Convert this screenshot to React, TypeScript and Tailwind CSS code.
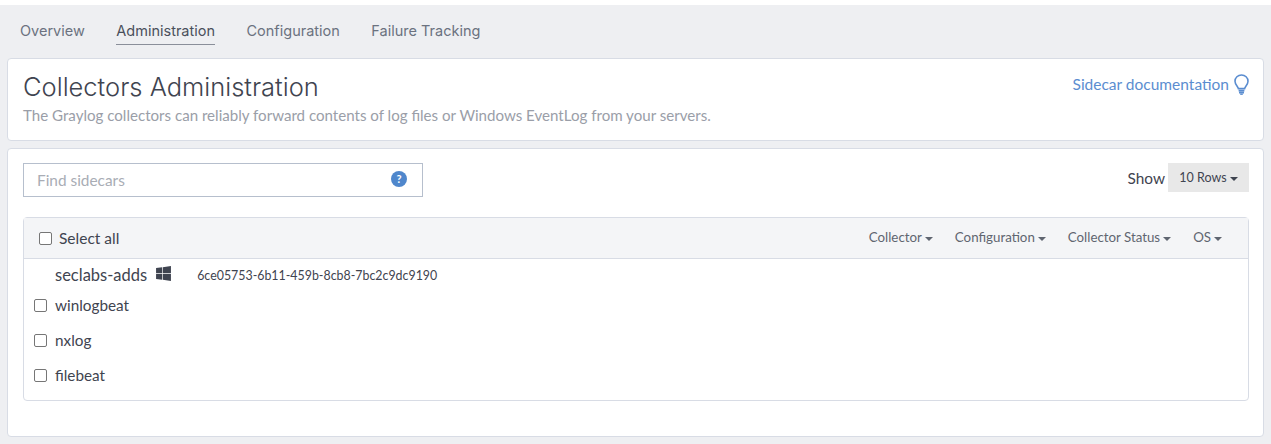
const bodyFont = "font-['Lato','Noto_Sans',sans-serif]";

const Caret = () => (
  <span className="ml-[3px] inline-block h-0 w-0 border-x-[4px] border-t-[4px] border-x-transparent border-t-current align-middle" />
);

const WindowsIcon = () => (
  <svg viewBox="0 0 448 512" className="mb-[3px] h-[17px] w-[15px] fill-[#3f4450]">
    <path d="M0 93.7l183.6-25.3v177.4H0V93.7zm0 324.6l183.6 25.3V268.4H0v149.9zm203.8 28L448 480V268.4H203.8v177.9zm0-380.6v180.1H448V32L203.8 65.7z" />
  </svg>
);

const BulbIcon = () => (
  <svg viewBox="0 0 15 21" className="h-[21px] w-[15px] fill-none stroke-[#5b8dd0]">
    <path
      d="M4.4 14.6C4 12.4 1 10.6 1 7.2 1 3.6 3.9 1 7.5 1S14 3.6 14 7.2c0 3.4-3 5.2-3.4 7.4z"
      strokeWidth="1.6"
    />
    <path d="M4.6 16.6h5.8M5 18.6h5" strokeWidth="1.8" />
    <path d="M6.2 20.2h2.6" strokeWidth="1.4" />
  </svg>
);

const tabs = ["Overview", "Administration", "Configuration", "Failure Tracking"];
const filters = ["Collector", "Configuration", "Collector Status", "OS"];
const collectors = ["winlogbeat", "nxlog", "filebeat"];

const App = () => {
  return (
    <div className={`${bodyFont} h-[444px] w-full overflow-hidden bg-white pt-[5px] text-[#3f4450]`}>
      <div className="flex h-[439px] flex-col bg-[#eeeff2] px-[7px]">
        <nav className="flex h-[53px] items-start gap-[31.5px] pl-[13px] pt-[15px] font-['Inter',sans-serif] text-[14.5px] text-[#6b7280]">
          {tabs.map((tab) => (
            <span
              key={tab}
              className={
                tab === "Administration"
                  ? "h-[25px] border-b border-[#8a8f9a] text-[#4a4f5c]"
                  : "h-[25px]"
              }
            >
              {tab}
            </span>
          ))}
        </nav>

        <section className="flex h-[83px] justify-between rounded-[4px] border border-[#d8dce5] bg-white pl-[15px] pr-[14px]">
          <div className="pt-[12px]">
            <h1 className="font-['Inter',sans-serif] text-[25.5px] leading-[32px] font-light">
              Collectors Administration
            </h1>
            <p className="mt-[2px] text-[15.1px] leading-[20px] text-[#9a9ea8]">
              The Graylog collectors can reliably forward contents of log files or Windows EventLog from your servers.
            </p>
          </div>
          <a className="flex h-fit items-center gap-[5px] pt-[14px] text-[15.5px] leading-[22px] text-[#5b8dd0]">
            Sidecar documentation
            <BulbIcon />
          </a>
        </section>

        <section className="mt-[7px] flex h-[289px] flex-col rounded-[4px] border border-[#d8dce5] bg-white pl-[15px] pr-[14px] pt-[14px]">
          <div className="flex items-start justify-between">
            <div className="flex h-[34px] w-[400px] items-center justify-between border border-[#b6bfcd] pl-[13px] pr-[15px] text-[15.4px] text-[#a9adb5]">
              <span className="pt-[2px]">Find sidecars</span>
              <span className="mb-[2px] flex h-4 w-4 items-center justify-center rounded-full bg-[#4f87cc] text-[11px] font-bold text-white">
                ?
              </span>
            </div>
            <div className="flex items-center gap-[3px] text-[15.4px]">
              <span className="pt-[2px]">Show</span>
              <span className="flex h-[29px] w-[81px] items-center justify-center bg-[#e8e8e8] pt-[2px] text-[12.5px]">
                10 Rows
                <Caret />
              </span>
            </div>
          </div>

          <div className="mt-[20px] flex h-[184px] flex-col rounded-[4px] border border-[#d8dce5]">
            <div className="flex h-[41px] shrink-0 items-center justify-between border-b border-[#d8dce5] bg-[#f4f5f7] pl-[15px] pr-[26px]">
              <label className="flex items-center gap-[7px] text-[15.5px]">
                <span className="h-[13px] w-[13px] rounded-[2px] border border-[#767676] bg-white" />
                <span className="pt-[2px]">Select all</span>
              </label>
              <div className="flex gap-[22px] text-[13.3px] text-[#5f6570]">
                {filters.map((filter) => (
                  <span key={filter}>
                    {filter}
                    <Caret />
                  </span>
                ))}
              </div>
            </div>
            <div className="flex items-center pb-[2px] pl-[31px] pt-[5px]">
              <span className="text-[16.5px] leading-[22px]">seclabs-adds</span>
              <span className="ml-[9px]">
                <WindowsIcon />
              </span>
              <span className="ml-[26px] pt-[2px] text-[12.4px]">6ce05753-6b11-459b-8cb8-7bc2c9dc9190</span>
            </div>
            {collectors.map((name) => (
              <div key={name} className="flex h-[35px] items-center gap-[8px] pl-[10px] text-[15.3px]">
                <span className="h-[13px] w-[13px] rounded-[2px] border border-[#767676] bg-white" />
                {name}
              </div>
            ))}
          </div>
        </section>
      </div>
    </div>
  );
};

export default App;
